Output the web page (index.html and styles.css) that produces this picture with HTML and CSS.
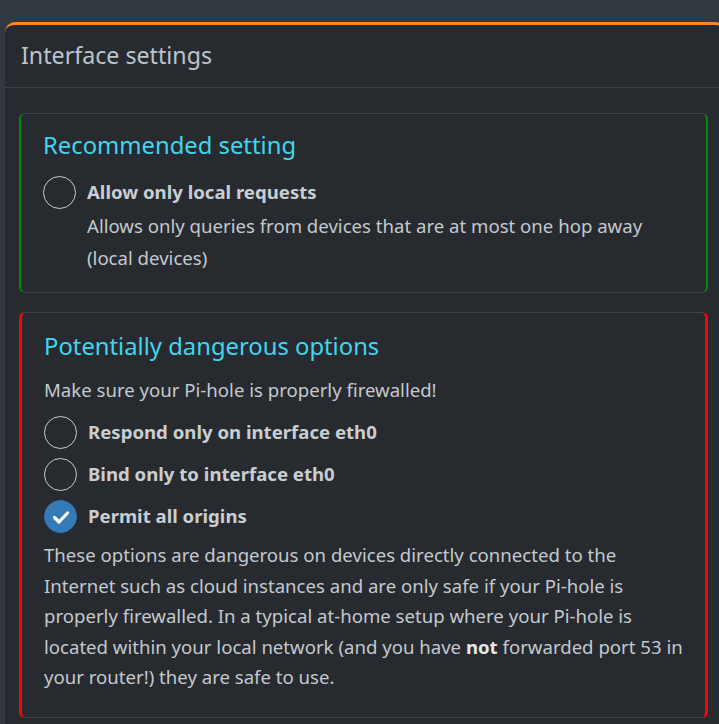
FILE: index.html
```html
<!DOCTYPE html>
<html lang="en">
<head>
    <meta charset="UTF-8">
    <meta name="viewport" content="width=device-width, initial-scale=1.0">
    <title>Interface settings</title>
    <link rel="stylesheet" href="styles.css">
</head>
<body>
    <div class="box">
        <div class="box-header">
            <h3>Interface settings</h3>
        </div>
        <div class="box-body">
            <div class="panel panel-success">
                <h4>Recommended setting</h4>
                <div class="option">
                    <span class="radio"></span>
                    <div>
                        <strong>Allow only local requests</strong>
                        <p class="desc">Allows only queries from devices that are at most one hop away (local devices)</p>
                    </div>
                </div>
            </div>
            <div class="panel panel-danger">
                <h4>Potentially dangerous options</h4>
                <p class="warn">Make sure your Pi-hole is properly firewalled!</p>
                <div class="option">
                    <span class="radio"></span>
                    <strong>Respond only on interface eth0</strong>
                </div>
                <div class="option">
                    <span class="radio"></span>
                    <strong>Bind only to interface eth0</strong>
                </div>
                <div class="option">
                    <span class="radio checked">
                        <svg viewBox="0 0 32 32" width="32" height="32"><path d="M9.5 16.5l4.5 4.5 8.5-9" fill="none" stroke="#fff" stroke-width="3.2" stroke-linecap="round" stroke-linejoin="round"/></svg>
                    </span>
                    <strong>Permit all origins</strong>
                </div>
                <p class="note">These options are dangerous on devices directly connected to the Internet such as cloud instances and are only safe if your Pi-hole is properly firewalled. In a typical at-home setup where your Pi-hole is located within your local network (and you have <b>not</b> forwarded port 53 in your router!) they are safe to use.</p>
            </div>
        </div>
    </div>
</body>
</html>
```

FILE: styles.css
```css
* {
    box-sizing: border-box;
    margin: 0;
    padding: 0;
}

body {
    font-family: "Noto Sans", sans-serif;
    font-size: 18.6px;
    line-height: 30px;
    color: #c3c9cf;
    background-color: #323840;
    padding: 22px 0 0 5px;
}

.box {
    background: #272b30;
    border-top: 3px solid #ff851b;
    border-radius: 10px 10px 0 0;
    width: 720px;
    padding-bottom: 20px;
}

.box-header {
    padding: 11px 16px 13px;
    border-bottom: 1px solid #393e44;
}

.box-header h3 {
    font-size: 23.2px;
    font-weight: 400;
    line-height: 38px;
    color: #bcc4cc;
}

.box-body {
    padding: 25px 0 0 14px;
    width: 703px;
}

.panel {
    border: 1px solid #3d4248;
    border-radius: 6px;
    padding: 13px 22px 18px 22px;
    margin-bottom: 19px;
}

.panel-success {
    border-left: 2px solid #008d00;
    border-right: 2px solid #008d00;
}

.panel-danger {
    border-left: 3px solid #ff0000;
    border-right: 3px solid #ff0000;
    padding-top: 15px;
    padding-bottom: 24px;
}

.panel h4 {
    font-size: 23.8px;
    font-weight: 400;
    line-height: 36px;
    color: #3fd6ee;
    margin-bottom: 13px;
}

.panel-danger h4 {
    margin-bottom: 11px;
}

.option {
    display: flex;
    align-items: flex-start;
    gap: 11px;
}

.option + .option {
    margin-top: 9px;
}

.option strong {
    display: block;
    line-height: 32px;
    color: #c9ced3;
}

.desc {
    margin-top: 2px;
    line-height: 32px;
}

.radio {
    flex: none;
    width: 33px;
    height: 33px;
    border: 1px solid #c8ccd0;
    border-radius: 50%;
}

.radio.checked {
    background: #337ab7;
    border-color: #337ab7;
}

.radio svg {
    display: block;
}

.warn {
    margin-bottom: 11px;
}

.note {
    margin-top: 7px;
    line-height: 30.5px;
}

.note b {
    color: #e4e7ea;
}
```
